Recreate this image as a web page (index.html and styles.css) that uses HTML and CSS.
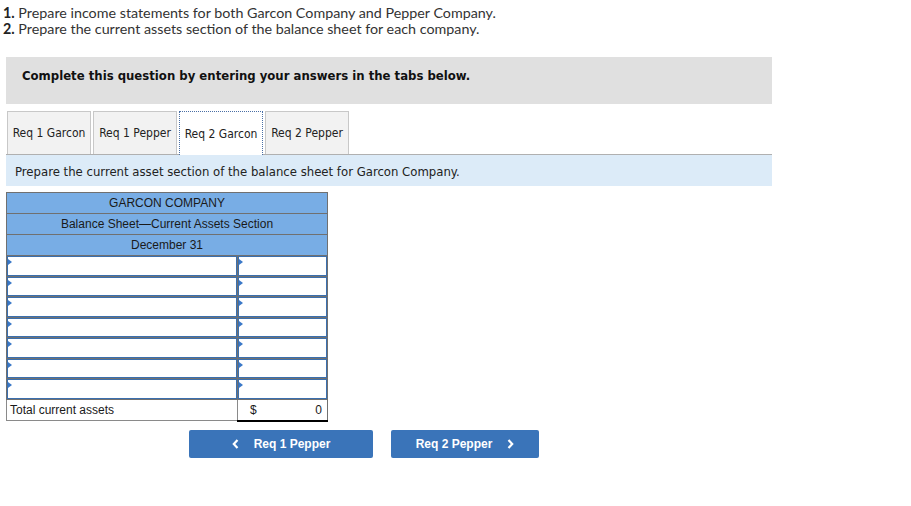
FILE: index.html
```html
<!DOCTYPE html>
<html>
<head>
<meta charset="utf-8">
<link rel="stylesheet" href="styles.css">
</head>
<body>
<div class="intro">
  <p><b>1.</b> Prepare income statements for both Garcon Company and Pepper Company.</p>
  <p><b>2.</b> Prepare the current assets section of the balance sheet for each company.</p>
</div>
<div class="panel">
  <div class="notice">Complete this question by entering your answers in the tabs below.</div>
  <div class="tabs">
    <div class="tab">Req 1 Garcon</div>
    <div class="tab">Req 1 Pepper</div>
    <div class="tab active">Req 2 Garcon</div>
    <div class="tab">Req 2 Pepper</div>
  </div>
  <div class="instruction">Prepare the current asset section of the balance sheet for Garcon Company.</div>
  <table class="sheet">
    <colgroup><col class="k1"><col class="k2"></colgroup>
    <tr class="head"><td colspan="2">GARCON COMPANY</td></tr>
    <tr class="head"><td colspan="2">Balance Sheet—Current Assets Section</td></tr>
    <tr class="head"><td colspan="2">December 31</td></tr>
    <tr class="in"><td><div class="field"></div></td><td><div class="field"></div></td></tr>
    <tr class="in"><td><div class="field"></div></td><td><div class="field"></div></td></tr>
    <tr class="in"><td><div class="field"></div></td><td><div class="field"></div></td></tr>
    <tr class="in"><td><div class="field"></div></td><td><div class="field"></div></td></tr>
    <tr class="in"><td><div class="field"></div></td><td><div class="field"></div></td></tr>
    <tr class="in"><td><div class="field"></div></td><td><div class="field"></div></td></tr>
    <tr class="in"><td><div class="field"></div></td><td><div class="field"></div></td></tr>
    <tr class="total"><td class="label">Total current assets</td><td class="amt"><div class="amt-in"><span>$</span><span>0</span></div></td></tr>
  </table>
  <div class="nav">
    <div class="btn prev"><svg class="chev" width="7" height="10" viewBox="0 0 7 10"><path d="M5.5 1 L1.8 5 L5.5 9" fill="none" stroke="#fff" stroke-width="2.2"/></svg>Req 1 Pepper</div>
    <div class="btn next">Req 2 Pepper<svg class="chev" width="7" height="10" viewBox="0 0 7 10"><path d="M1.5 1 L5.2 5 L1.5 9" fill="none" stroke="#fff" stroke-width="2.2"/></svg></div>
  </div>
</div>
</body>
</html>
```
FILE: styles.css
```css
html, body { margin: 0; padding: 0; background: #fff; }
body { font-family: "Lato", "Open Sans", sans-serif; color: #333; }
.intro { padding: 5px 0 0 3px; font-size: 14.3px; line-height: 16px; }
.intro p { margin: 0; }
.intro b { color: #222; }
.panel { margin-left: 6px; width: 766px; }
.notice {
  margin-top: 20px; height: 47px; background: #e0e0e0;
  font-family: "DejaVu Sans Condensed", "DejaVu Sans", sans-serif; font-weight: bold;
  font-size: 13px; color: #111; padding-left: 16px; line-height: 38px; box-sizing: border-box;
}
.tabs { display: flex; gap: 2px; margin-top: 7px; border-bottom: 1px solid #b0b0b0; height: 43px; padding-left: 1px; }
.tab {
  width: 84px; height: 43px; box-sizing: border-box; border: 1px solid #c8c8c8; border-bottom: none;
  background: #f2f2f2; font-family: "DejaVu Sans Condensed", "DejaVu Sans", sans-serif; font-size: 12px;
  color: #222; display: flex; align-items: center; justify-content: center;
}
.tab.active { background: #fff; border: 1px dotted #4a6fa5; border-bottom: none; height: 44px; margin-bottom: -1px; }
.instruction {
  height: 31px; background: #dcebf8; font-family: "DejaVu Sans Condensed", "DejaVu Sans", sans-serif;
  font-size: 13px; color: #222; padding-left: 9px; line-height: 33px; box-sizing: border-box;
}
.sheet { margin-top: 6px; border-collapse: collapse; table-layout: fixed; width: 321px; font-family: "Liberation Sans", Arial, sans-serif; font-size: 12px; color: #1a1a1a; }
.k1 { width: 231px; }
.k2 { width: 90px; }
.sheet td { border: 1px solid #707070; padding: 0; }
.head td { background: #78ade5; text-align: center; height: 20px; }
.in td { height: 19.5px; }
.field { position: relative; height: 17.5px; border: 1px solid #3b6fae; background: #fff; }
.field::before {
  content: ""; position: absolute; left: 0; top: 2px; width: 0; height: 0;
  border-top: 3px solid transparent; border-bottom: 3px solid transparent; border-left: 4px solid #3a78c8;
}
.total td { height: 20px; }
.sheet .label { padding-left: 3px; border-color: #8a8a8a; }
.sheet .amt { border-bottom: 2px solid #000; border-top: 1px solid #222; }
.amt-in { display: flex; justify-content: space-between; padding: 0 5px 0 12px; }
.nav { display: flex; gap: 18px; margin-top: 8px; padding-left: 183px; }
.btn {
  height: 28px; background: #3a74b9; border-radius: 2px; color: #fff; font-family: "Liberation Sans", Arial, sans-serif;
  font-weight: bold; font-size: 12px; display: flex; align-items: center; justify-content: center; box-sizing: border-box;
}
.btn.prev { width: 184px; }
.btn.next { width: 148px; }
.prev .chev { margin-right: 15px; }
.next .chev { margin-left: 15px; }
```
